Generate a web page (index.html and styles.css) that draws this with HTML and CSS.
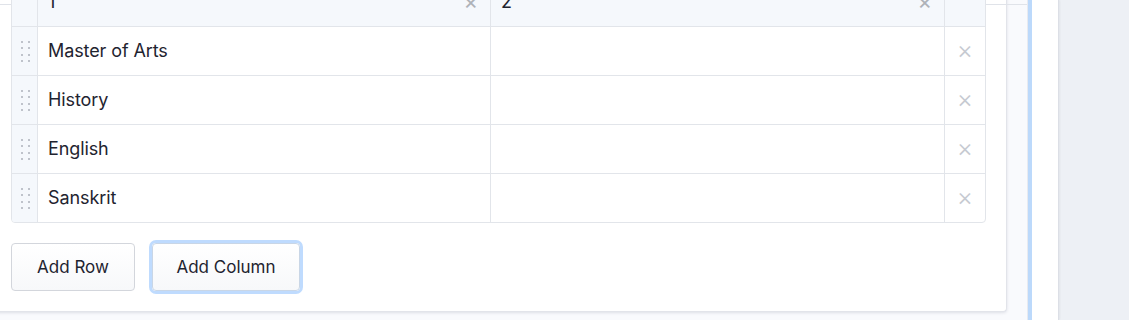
FILE: index.html
```html
<!DOCTYPE html>
<html>
  <head>
    <meta name="viewport" content="width=device-width,initial-scale=1.0">
    <title>Table editor</title>
    <link rel="stylesheet" href="styles.css">
  </head>
  <body>
    <div class="page">
      <div class="main">
        <div class="card">
          <div class="grid">
            <div class="row head">
              <div class="handle"></div>
              <div class="cell">1<span class="x">&times;</span></div>
              <div class="cell">2<span class="x">&times;</span></div>
              <div class="del"></div>
            </div>
            <div class="row">
              <div class="handle"><svg class="dots" width="9" height="21" viewBox="0 0 9 21"><g fill="#bfc3cb"><rect x="0" y="0" width="2" height="2"/><rect x="7" y="0" width="2" height="2"/><rect x="0" y="6" width="2" height="2"/><rect x="7" y="6" width="2" height="2"/><rect x="0" y="13" width="2" height="2"/><rect x="7" y="13" width="2" height="2"/><rect x="0" y="19" width="2" height="2"/><rect x="7" y="19" width="2" height="2"/></g></svg></div>
              <div class="cell">Master of Arts</div>
              <div class="cell"></div>
              <div class="del">&times;</div>
            </div>
            <div class="row">
              <div class="handle"><svg class="dots" width="9" height="21" viewBox="0 0 9 21"><g fill="#bfc3cb"><rect x="0" y="0" width="2" height="2"/><rect x="7" y="0" width="2" height="2"/><rect x="0" y="6" width="2" height="2"/><rect x="7" y="6" width="2" height="2"/><rect x="0" y="13" width="2" height="2"/><rect x="7" y="13" width="2" height="2"/><rect x="0" y="19" width="2" height="2"/><rect x="7" y="19" width="2" height="2"/></g></svg></div>
              <div class="cell">History</div>
              <div class="cell"></div>
              <div class="del">&times;</div>
            </div>
            <div class="row">
              <div class="handle"><svg class="dots" width="9" height="21" viewBox="0 0 9 21"><g fill="#bfc3cb"><rect x="0" y="0" width="2" height="2"/><rect x="7" y="0" width="2" height="2"/><rect x="0" y="6" width="2" height="2"/><rect x="7" y="6" width="2" height="2"/><rect x="0" y="13" width="2" height="2"/><rect x="7" y="13" width="2" height="2"/><rect x="0" y="19" width="2" height="2"/><rect x="7" y="19" width="2" height="2"/></g></svg></div>
              <div class="cell">English</div>
              <div class="cell"></div>
              <div class="del">&times;</div>
            </div>
            <div class="row">
              <div class="handle"><svg class="dots" width="9" height="21" viewBox="0 0 9 21"><g fill="#bfc3cb"><rect x="0" y="0" width="2" height="2"/><rect x="7" y="0" width="2" height="2"/><rect x="0" y="6" width="2" height="2"/><rect x="7" y="6" width="2" height="2"/><rect x="0" y="13" width="2" height="2"/><rect x="7" y="13" width="2" height="2"/><rect x="0" y="19" width="2" height="2"/><rect x="7" y="19" width="2" height="2"/></g></svg></div>
              <div class="cell">Sanskrit</div>
              <div class="cell"></div>
              <div class="del">&times;</div>
            </div>
          </div>
          <div class="actions">
            <button type="button" class="btn add-row">Add Row</button>
            <button type="button" class="btn add-col focus">Add Column</button>
          </div>
        </div>
      </div>
      <div class="accent"></div>
      <div class="side"></div>
      <div class="rest"></div>
    </div>
  </body>
</html>
```

FILE: styles.css
```css
body { margin: 0; font-family: Inter, "Noto Sans", sans-serif; color: #1f2430; background: #edf0f5; }

.page { display: flex; height: 320px; overflow: hidden; }

.main {
  position: relative;
  width: 1027px;
  flex-shrink: 0;
  background: #f9fafd;
  border-right: 1px solid #e8eaf0;
}
.main::before {
  content: "";
  position: absolute;
  top: 4px;
  left: 0;
  right: 0;
  height: 1px;
  background: #e0e3e9;
  z-index: 2;
}

.accent { width: 4px; flex-shrink: 0; background: #bcd9fb; }
.side { width: 26px; flex-shrink: 0; background: #fff; border-right: 1px solid #dcdfe6; box-shadow: 1px 0 2px rgba(0,0,0,0.05); }
.rest { flex-grow: 1; }

.card {
  width: 1017px;
  margin: -43px 0 0 -10px;
  padding: 20px 0 20px 20px;
  box-sizing: border-box;
  background: #fff;
  border: 1px solid #e2e4ea;
  border-top: none;
  border-radius: 0 0 4px 4px;
  box-shadow: 0 1px 3px rgba(30,40,70,0.12);
}

.grid {
  position: relative;
  z-index: 3;
  width: 975px;
  box-sizing: border-box;
  border: 1px solid #e2e5ea;
  border-radius: 4px;
  overflow: hidden;
}

.row { display: grid; grid-template-columns: 26px 453px 454px 40px; height: 48px; border-top: 1px solid #e2e5ea; }
.row:first-child { border-top: none; }
.row.head { background: #f5f8fc; }

.handle { background: #f5f8fc; border-right: 1px solid #e2e5ea; display: flex; align-items: center; justify-content: center; }
.dots { display: block; margin: 1px 0 0 1px; }

.cell {
  position: relative;
  border-right: 1px solid #e2e5ea;
  padding: 0 10px 2px;
  display: flex;
  align-items: center;
  font-size: 18px;
  letter-spacing: -0.1px;
}
.cell .x { position: absolute; right: 12px; top: 12px; color: #aeb2b9; font-size: 22px; line-height: 1; }

.del { display: flex; align-items: center; justify-content: center; color: #c6cad1; font-size: 25px; font-weight: 300; padding-bottom: 2px; }

.actions { display: flex; gap: 17px; margin-top: 20px; }

.btn {
  height: 48px;
  padding: 0;
  font-family: inherit;
  font-size: 17px;
  color: #1f2430;
  background: linear-gradient(#fff, #f7f8fa);
  border: 1px solid #d3d6dc;
  border-radius: 4px;
  cursor: pointer;
}
.add-row { width: 124px; }
.add-col { width: 148px; }
.btn.focus { box-shadow: 0 0 0 3px #bfdbfe; border-color: #c9d6e6; }
```
